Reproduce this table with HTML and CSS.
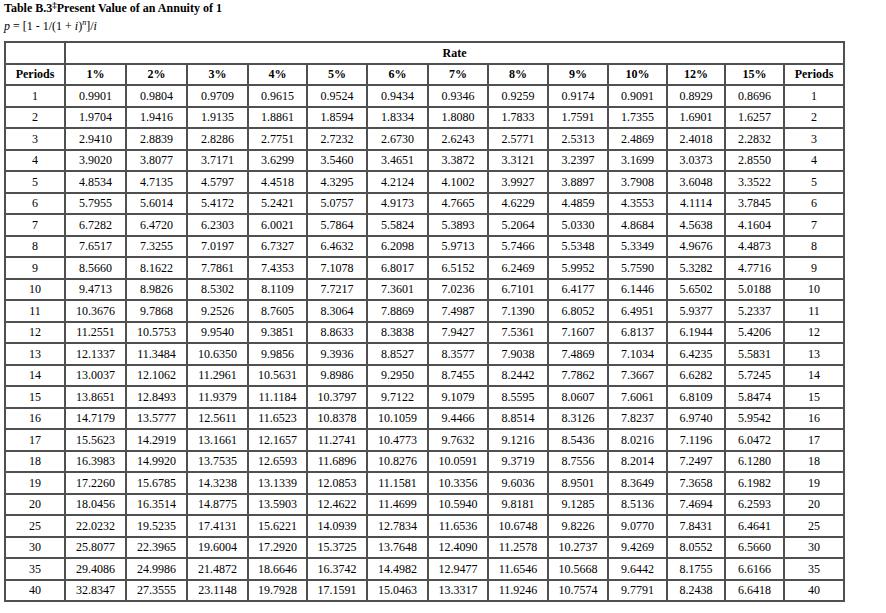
FILE: index.html
```html
<!DOCTYPE html>
<html>
<head>
<meta charset="utf-8">
<link rel="stylesheet" href="styles.css">
</head>
<body>
<div class="caption">
  <div class="title">Table B.3<sup class="dag">‡</sup>Present Value of an Annuity of 1</div>
  <div class="formula"><i>p</i> = [1 - 1/(1 + <i>i</i>)<sup class="exp"><i>n</i></sup>]/<i>i</i></div>
</div>
<table class="annuity">
  <colgroup>
    <col class="c60"><col class="c61"><col class="c61"><col class="c61"><col class="c59"><col class="c60"><col class="c61"><col class="c60"><col class="c60"><col class="c60"><col class="c59"><col class="c58"><col class="c59"><col class="c60">
  </colgroup>
  <thead>
    <tr class="r-top"><th></th><th colspan="13">Rate</th></tr>
    <tr><th>Periods</th><th>1%</th><th>2%</th><th>3%</th><th>4%</th><th>5%</th><th>6%</th><th>7%</th><th>8%</th><th>9%</th><th>10%</th><th>12%</th><th>15%</th><th>Periods</th></tr>
  </thead>
  <tbody>
    <tr><td>1</td><td>0.9901</td><td>0.9804</td><td>0.9709</td><td>0.9615</td><td>0.9524</td><td>0.9434</td><td>0.9346</td><td>0.9259</td><td>0.9174</td><td>0.9091</td><td>0.8929</td><td>0.8696</td><td>1</td></tr>
    <tr><td>2</td><td>1.9704</td><td>1.9416</td><td>1.9135</td><td>1.8861</td><td>1.8594</td><td>1.8334</td><td>1.8080</td><td>1.7833</td><td>1.7591</td><td>1.7355</td><td>1.6901</td><td>1.6257</td><td>2</td></tr>
    <tr><td>3</td><td>2.9410</td><td>2.8839</td><td>2.8286</td><td>2.7751</td><td>2.7232</td><td>2.6730</td><td>2.6243</td><td>2.5771</td><td>2.5313</td><td>2.4869</td><td>2.4018</td><td>2.2832</td><td>3</td></tr>
    <tr><td>4</td><td>3.9020</td><td>3.8077</td><td>3.7171</td><td>3.6299</td><td>3.5460</td><td>3.4651</td><td>3.3872</td><td>3.3121</td><td>3.2397</td><td>3.1699</td><td>3.0373</td><td>2.8550</td><td>4</td></tr>
    <tr><td>5</td><td>4.8534</td><td>4.7135</td><td>4.5797</td><td>4.4518</td><td>4.3295</td><td>4.2124</td><td>4.1002</td><td>3.9927</td><td>3.8897</td><td>3.7908</td><td>3.6048</td><td>3.3522</td><td>5</td></tr>
    <tr><td>6</td><td>5.7955</td><td>5.6014</td><td>5.4172</td><td>5.2421</td><td>5.0757</td><td>4.9173</td><td>4.7665</td><td>4.6229</td><td>4.4859</td><td>4.3553</td><td>4.1114</td><td>3.7845</td><td>6</td></tr>
    <tr><td>7</td><td>6.7282</td><td>6.4720</td><td>6.2303</td><td>6.0021</td><td>5.7864</td><td>5.5824</td><td>5.3893</td><td>5.2064</td><td>5.0330</td><td>4.8684</td><td>4.5638</td><td>4.1604</td><td>7</td></tr>
    <tr><td>8</td><td>7.6517</td><td>7.3255</td><td>7.0197</td><td>6.7327</td><td>6.4632</td><td>6.2098</td><td>5.9713</td><td>5.7466</td><td>5.5348</td><td>5.3349</td><td>4.9676</td><td>4.4873</td><td>8</td></tr>
    <tr><td>9</td><td>8.5660</td><td>8.1622</td><td>7.7861</td><td>7.4353</td><td>7.1078</td><td>6.8017</td><td>6.5152</td><td>6.2469</td><td>5.9952</td><td>5.7590</td><td>5.3282</td><td>4.7716</td><td>9</td></tr>
    <tr><td>10</td><td>9.4713</td><td>8.9826</td><td>8.5302</td><td>8.1109</td><td>7.7217</td><td>7.3601</td><td>7.0236</td><td>6.7101</td><td>6.4177</td><td>6.1446</td><td>5.6502</td><td>5.0188</td><td>10</td></tr>
    <tr><td>11</td><td>10.3676</td><td>9.7868</td><td>9.2526</td><td>8.7605</td><td>8.3064</td><td>7.8869</td><td>7.4987</td><td>7.1390</td><td>6.8052</td><td>6.4951</td><td>5.9377</td><td>5.2337</td><td>11</td></tr>
    <tr><td>12</td><td>11.2551</td><td>10.5753</td><td>9.9540</td><td>9.3851</td><td>8.8633</td><td>8.3838</td><td>7.9427</td><td>7.5361</td><td>7.1607</td><td>6.8137</td><td>6.1944</td><td>5.4206</td><td>12</td></tr>
    <tr><td>13</td><td>12.1337</td><td>11.3484</td><td>10.6350</td><td>9.9856</td><td>9.3936</td><td>8.8527</td><td>8.3577</td><td>7.9038</td><td>7.4869</td><td>7.1034</td><td>6.4235</td><td>5.5831</td><td>13</td></tr>
    <tr><td>14</td><td>13.0037</td><td>12.1062</td><td>11.2961</td><td>10.5631</td><td>9.8986</td><td>9.2950</td><td>8.7455</td><td>8.2442</td><td>7.7862</td><td>7.3667</td><td>6.6282</td><td>5.7245</td><td>14</td></tr>
    <tr><td>15</td><td>13.8651</td><td>12.8493</td><td>11.9379</td><td>11.1184</td><td>10.3797</td><td>9.7122</td><td>9.1079</td><td>8.5595</td><td>8.0607</td><td>7.6061</td><td>6.8109</td><td>5.8474</td><td>15</td></tr>
    <tr><td>16</td><td>14.7179</td><td>13.5777</td><td>12.5611</td><td>11.6523</td><td>10.8378</td><td>10.1059</td><td>9.4466</td><td>8.8514</td><td>8.3126</td><td>7.8237</td><td>6.9740</td><td>5.9542</td><td>16</td></tr>
    <tr><td>17</td><td>15.5623</td><td>14.2919</td><td>13.1661</td><td>12.1657</td><td>11.2741</td><td>10.4773</td><td>9.7632</td><td>9.1216</td><td>8.5436</td><td>8.0216</td><td>7.1196</td><td>6.0472</td><td>17</td></tr>
    <tr><td>18</td><td>16.3983</td><td>14.9920</td><td>13.7535</td><td>12.6593</td><td>11.6896</td><td>10.8276</td><td>10.0591</td><td>9.3719</td><td>8.7556</td><td>8.2014</td><td>7.2497</td><td>6.1280</td><td>18</td></tr>
    <tr><td>19</td><td>17.2260</td><td>15.6785</td><td>14.3238</td><td>13.1339</td><td>12.0853</td><td>11.1581</td><td>10.3356</td><td>9.6036</td><td>8.9501</td><td>8.3649</td><td>7.3658</td><td>6.1982</td><td>19</td></tr>
    <tr><td>20</td><td>18.0456</td><td>16.3514</td><td>14.8775</td><td>13.5903</td><td>12.4622</td><td>11.4699</td><td>10.5940</td><td>9.8181</td><td>9.1285</td><td>8.5136</td><td>7.4694</td><td>6.2593</td><td>20</td></tr>
    <tr><td>25</td><td>22.0232</td><td>19.5235</td><td>17.4131</td><td>15.6221</td><td>14.0939</td><td>12.7834</td><td>11.6536</td><td>10.6748</td><td>9.8226</td><td>9.0770</td><td>7.8431</td><td>6.4641</td><td>25</td></tr>
    <tr><td>30</td><td>25.8077</td><td>22.3965</td><td>19.6004</td><td>17.2920</td><td>15.3725</td><td>13.7648</td><td>12.4090</td><td>11.2578</td><td>10.2737</td><td>9.4269</td><td>8.0552</td><td>6.5660</td><td>30</td></tr>
    <tr><td>35</td><td>29.4086</td><td>24.9986</td><td>21.4872</td><td>18.6646</td><td>16.3742</td><td>14.4982</td><td>12.9477</td><td>11.6546</td><td>10.5668</td><td>9.6442</td><td>8.1755</td><td>6.6166</td><td>35</td></tr>
    <tr><td>40</td><td>32.8347</td><td>27.3555</td><td>23.1148</td><td>19.7928</td><td>17.1591</td><td>15.0463</td><td>13.3317</td><td>11.9246</td><td>10.7574</td><td>9.7791</td><td>8.2438</td><td>6.6418</td><td>40</td></tr>
  </tbody>
</table>
</body>
</html>
```
FILE: styles.css
```css
html, body {
  margin: 0;
  padding: 0;
  background: #ffffff;
}
body {
  padding: 0 4px;
  font-family: "Liberation Serif", "Times New Roman", serif;
  font-size: 12px;
  color: #000;
}
.title {
  font-weight: bold;
  font-size: 12px;
  line-height: 16px;
}
.dag {
  font-size: 9px;
  line-height: 0;
  vertical-align: 4px;
}
.formula {
  font-size: 12px;
  line-height: 17px;
  padding-top: 2px;
}
.exp {
  font-size: 8px;
  line-height: 0;
  vertical-align: 5px;
}
.annuity {
  margin-top: 6px;
  width: 839px;
  table-layout: fixed;
  border-collapse: collapse;
  border: 2px solid #505050;
}
.c58 { width: 58px; }
.c59 { width: 59px; }
.c60 { width: 60px; }
.c61 { width: 61px; }
.annuity th,
.annuity td {
  border: 2px solid #505050;
  padding: 0;
  text-align: center;
  vertical-align: middle;
  font-size: 12px;
  line-height: 14px;
}
.annuity th {
  font-weight: bold;
}
.annuity tr {
  height: 21.5px;
}
```
